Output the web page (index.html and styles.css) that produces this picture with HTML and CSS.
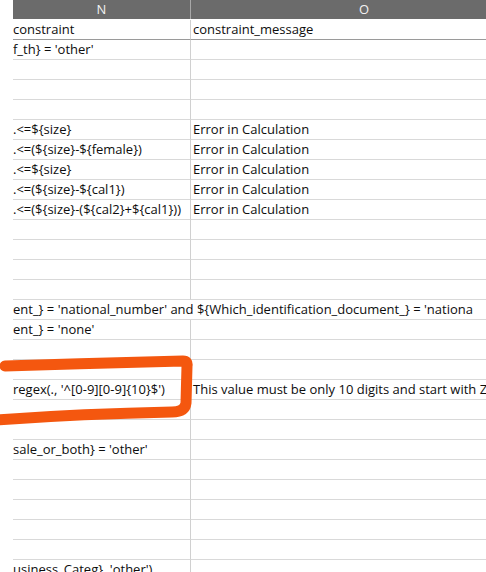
FILE: index.html
```html
<!DOCTYPE html>
<html>
<head>
<meta charset="utf-8">
<link rel="stylesheet" href="styles.css">
</head>
<body>
<div class="sheet">
  <div class="head">N</div><div class="head o">O</div>
  <div class="c n top">constraint</div><div class="c top">constraint_message</div>
  <div class="c n">f_th} = 'other'</div><div class="c"></div>
  <div class="c n"></div><div class="c"></div>
  <div class="c n"></div><div class="c"></div>
  <div class="c n"></div><div class="c"></div>
  <div class="c n">.&lt;=${size}</div><div class="c">Error in Calculation</div>
  <div class="c n">.&lt;=(${size}-${female})</div><div class="c">Error in Calculation</div>
  <div class="c n">.&lt;=${size}</div><div class="c">Error in Calculation</div>
  <div class="c n">.&lt;=(${size}-${cal1})</div><div class="c">Error in Calculation</div>
  <div class="c n">.&lt;=(${size}-(${cal2}+${cal1}))</div><div class="c">Error in Calculation</div>
  <div class="c n"></div><div class="c"></div>
  <div class="c n"></div><div class="c"></div>
  <div class="c n"></div><div class="c"></div>
  <div class="c n"></div><div class="c"></div>
  <div class="c wide">ent_} = 'national_number' and ${Which_identification_document_} = 'nationa</div>
  <div class="c n">ent_} = 'none'</div><div class="c"></div>
  <div class="c n"></div><div class="c"></div>
  <div class="c n"></div><div class="c"></div>
  <div class="c n">regex(., '^[0-9][0-9]{10}$')</div><div class="c">This value must be only 10 digits and start with Z</div>
  <div class="c n"></div><div class="c"></div>
  <div class="c n"></div><div class="c"></div>
  <div class="c n">sale_or_both} = 'other'</div><div class="c"></div>
  <div class="c n"></div><div class="c"></div>
  <div class="c n"></div><div class="c"></div>
  <div class="c n"></div><div class="c"></div>
  <div class="c n"></div><div class="c"></div>
  <div class="c n"></div><div class="c"></div>
  <div class="c n">usiness_Categ}, 'other')</div><div class="c"></div>
</div>
<svg class="mark" width="486" height="572" viewBox="0 0 486 572">
  <path d="M 5 366 C 60 364, 140 362, 183 361 Q 188 361 187 366 L 186 403 Q 185 412 172 412 C 120 413, 50 416, -4 420" fill="none" stroke="#f4570f" stroke-width="11" stroke-linecap="round" stroke-linejoin="round"/>
</svg>
</body>
</html>
```
FILE: styles.css
```css
html, body {
  margin: 0;
  padding: 0;
  background: #ffffff;
  overflow: hidden;
}
body {
  width: 486px;
  height: 572px;
  position: relative;
  font-family: "Open Sans", "Liberation Sans", sans-serif;
  font-size: 13px;
  color: #0d0d0d;
}
.sheet {
  display: grid;
  grid-template-columns: 178px 346px;
  grid-auto-rows: 20px;
  padding-left: 13px;
}
.head {
  height: 19px;
  background: #6b6b6b;
  color: #f2f2f2;
  text-align: center;
  line-height: 19px;
  font-size: 13px;
  border-right: 1px solid #a8a8a8;
  box-sizing: border-box;
}
.head.o {
  border-right: none;
}
.c {
  box-sizing: border-box;
  height: 20px;
  border-bottom: 1px solid #d9d9d9;
  white-space: nowrap;
  overflow: hidden;
  line-height: 18px;
  padding-left: 2px;
  background: #ffffff;
}
.c.n {
  border-right: 1px solid #d0d0d0;
  padding-left: 0;
}
.c.top {
  border-bottom-color: #9a9a9a;
}
.c.wide {
  grid-column: span 2;
  padding-left: 0;
}
.mark {
  position: absolute;
  left: 0;
  top: 0;
  pointer-events: none;
}
```
